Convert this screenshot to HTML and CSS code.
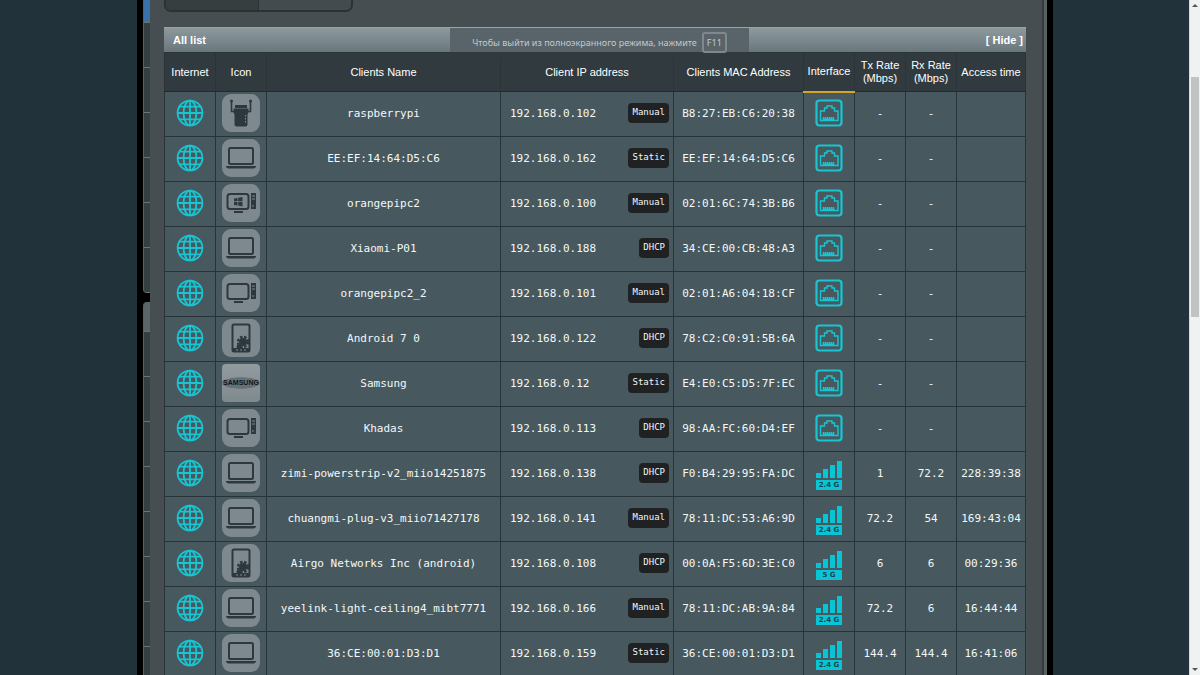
FILE: index.html
```html
<!DOCTYPE html>
<html lang="en">
<head>
<meta charset="utf-8">
<title>Client list</title>
<link rel="stylesheet" href="styles.css">
</head>
<body>
<svg class="sprite" aria-hidden="true">
  <symbol id="globe" viewBox="0 0 28 28"><g fill="none" stroke="currentColor" stroke-width="1.8"><circle cx="14" cy="14" r="12.4"/><ellipse cx="14" cy="14" rx="6.4" ry="12.4"/><path d="M14 1.6v24.8M1.6 14h24.8M3.6 7.6h20.8M3.6 20.4h20.8"/></g></symbol>
  <symbol id="laptop" viewBox="0 0 38 38"><rect x="7" y="9" width="24" height="16" rx="1.5" fill="none" stroke="currentColor" stroke-width="2"/><path fill="currentColor" d="M4 27h30v1l-2 1.500H6L4 28z"/></symbol>
  <symbol id="desktop" viewBox="0 0 38 38"><rect x="5.500" y="10" width="21" height="15" rx="2.500" fill="none" stroke="currentColor" stroke-width="2"/><path fill="currentColor" d="M12 27h9v2h-9zM29 9h5v16h-5z"/><path stroke="#7d898e" stroke-width="1" d="M30 12h3M30 15h3M30 22h2"/></symbol>
  <symbol id="windows" viewBox="0 0 38 38"><use href="#desktop"/><path fill="currentColor" d="M12 14.500l3.500-.6v3.300H12zM16.200 13.800l4.300-.8v4.200h-4.300zM12 18h3.500v3.500l-3.500-.6zM16.200 18h4.300v4.400l-4.300-.8z"/></symbol>
  <symbol id="extender" viewBox="0 0 38 38"><path fill="none" stroke="currentColor" stroke-width="1.600" d="M9.500 7v10.500h4M28.500 7v10.500h-4"/><circle cx="9.500" cy="7" r="1.500" fill="currentColor"/><circle cx="28.500" cy="7" r="1.500" fill="currentColor"/><path fill="currentColor" d="M13 11h12v3H13zM11.500 14.500h15v4l-1 2v10q0 2-2 2h-9q-2 0-2-2v-10l-1-2z"/><path stroke="#7d898e" stroke-width="1" stroke-dasharray="1.500 1.500" d="M23.500 21v8"/></symbol>
  <symbol id="phone" viewBox="0 0 38 38"><rect x="10.500" y="5.500" width="17" height="27" rx="1.500" fill="none" stroke="currentColor" stroke-width="2"/><path fill="currentColor" d="M11 29h16v4H11z"/><circle cx="21" cy="23" r="4" fill="currentColor"/><circle cx="21" cy="23" r="5" fill="none" stroke="currentColor" stroke-width="2.500" stroke-dasharray="2.500 1.500"/><circle cx="17" cy="28" r="2.500" fill="currentColor"/><path stroke="#7d898e" d="M14 31h2M18 31h2M22 31h2"/></symbol>
  <symbol id="ethernet" viewBox="0 0 28 28"><rect x="1.500" y="1.500" width="25" height="25" rx="3" fill="none" stroke="currentColor" stroke-width="2.200"/><path fill="none" stroke="currentColor" stroke-width="1.400" d="M5.500 21.500V12h4V9h2.500V7h5v2h2.500v3h3.500v9.500z"/><path stroke="currentColor" stroke-width="1.500" d="M8.500 22v-4M10.500 22v-4M12.500 22v-4M14.500 22v-4M16.500 22v-4M18.500 22v-4M8 20.500h11"/></symbol>
  <symbol id="bars" viewBox="0 0 26 17"><path fill="currentColor" d="M0 12h5v5H0zM7 8h5v9H7zM14 4h5v13h-5zM21 0h5v17h-5z"/></symbol>
</svg>

<div class="page">
  <div class="frame">
    <nav class="rail" aria-label="Main menu">
      <div class="rail-group"><a class="active" href="#" aria-label="Network map"></a><a href="#" aria-label="Guest network"></a><a href="#" aria-label="Protection"></a><a href="#" aria-label="Traffic"></a><a href="#" aria-label="Media"></a><a href="#" aria-label="Cloud"></a><a href="#" aria-label="Tools"></a></div>
      <div class="rail-group"><a href="#" aria-label="Wireless"></a><a href="#" aria-label="LAN"></a><a href="#" aria-label="WAN"></a><a href="#" aria-label="IPv6"></a><a href="#" aria-label="VPN"></a><a href="#" aria-label="Firewall"></a><a href="#" aria-label="Administration"></a><a href="#" aria-label="System log"></a><a href="#" aria-label="Settings"></a></div>
    </nav>
    <main class="content">
      <div class="tabs"><button type="button" class="on" aria-label="By interface"></button><button type="button" aria-label="All"></button></div>
      <header class="title"><h1>All list</h1><button type="button">[ Hide ]</button></header>
      <table class="clients">
        <colgroup><col class="c-small"><col class="c-small"><col><col class="c-ip"><col class="c-mac"><col class="c-small"><col class="c-small"><col class="c-small"><col class="c-time"></colgroup>
        <thead><tr><th>Internet</th><th>Icon</th><th>Clients Name</th><th>Client IP address</th><th>Clients MAC Address</th><th class="sorted">Interface</th><th>Tx Rate (Mbps)</th><th>Rx Rate (Mbps)</th><th>Access time</th></tr></thead>
        <tbody>
          <tr><td><svg class="globe"><use href="#globe"/></svg></td><td><svg class="device"><use href="#extender"/></svg></td><td>raspberrypi</td><td><div class="ip">192.168.0.102<span class="badge">Manual</span></div></td><td>B8:27:EB:C6:20:38</td><td><svg class="port"><use href="#ethernet"/></svg></td><td>-</td><td>-</td><td></td></tr>
          <tr><td><svg class="globe"><use href="#globe"/></svg></td><td><svg class="device"><use href="#laptop"/></svg></td><td>EE:EF:14:64:D5:C6</td><td><div class="ip">192.168.0.162<span class="badge">Static</span></div></td><td>EE:EF:14:64:D5:C6</td><td><svg class="port"><use href="#ethernet"/></svg></td><td>-</td><td>-</td><td></td></tr>
          <tr><td><svg class="globe"><use href="#globe"/></svg></td><td><svg class="device"><use href="#windows"/></svg></td><td>orangepipc2</td><td><div class="ip">192.168.0.100<span class="badge">Manual</span></div></td><td>02:01:6C:74:3B:B6</td><td><svg class="port"><use href="#ethernet"/></svg></td><td>-</td><td>-</td><td></td></tr>
          <tr><td><svg class="globe"><use href="#globe"/></svg></td><td><svg class="device"><use href="#laptop"/></svg></td><td>Xiaomi-P01</td><td><div class="ip">192.168.0.188<span class="badge">DHCP</span></div></td><td>34:CE:00:CB:48:A3</td><td><svg class="port"><use href="#ethernet"/></svg></td><td>-</td><td>-</td><td></td></tr>
          <tr><td><svg class="globe"><use href="#globe"/></svg></td><td><svg class="device"><use href="#desktop"/></svg></td><td>orangepipc2_2</td><td><div class="ip">192.168.0.101<span class="badge">Manual</span></div></td><td>02:01:A6:04:18:CF</td><td><svg class="port"><use href="#ethernet"/></svg></td><td>-</td><td>-</td><td></td></tr>
          <tr><td><svg class="globe"><use href="#globe"/></svg></td><td><svg class="device"><use href="#phone"/></svg></td><td>Android 7 0</td><td><div class="ip">192.168.0.122<span class="badge">DHCP</span></div></td><td>78:C2:C0:91:5B:6A</td><td><svg class="port"><use href="#ethernet"/></svg></td><td>-</td><td>-</td><td></td></tr>
          <tr><td><svg class="globe"><use href="#globe"/></svg></td><td><div class="device brand">SAMSUNG</div></td><td>Samsung</td><td><div class="ip">192.168.0.12<span class="badge">Static</span></div></td><td>E4:E0:C5:D5:7F:EC</td><td><svg class="port"><use href="#ethernet"/></svg></td><td>-</td><td>-</td><td></td></tr>
          <tr><td><svg class="globe"><use href="#globe"/></svg></td><td><svg class="device"><use href="#desktop"/></svg></td><td>Khadas</td><td><div class="ip">192.168.0.113<span class="badge">DHCP</span></div></td><td>98:AA:FC:60:D4:EF</td><td><svg class="port"><use href="#ethernet"/></svg></td><td>-</td><td>-</td><td></td></tr>
          <tr><td><svg class="globe"><use href="#globe"/></svg></td><td><svg class="device"><use href="#laptop"/></svg></td><td>zimi-powerstrip-v2_miio14251875</td><td><div class="ip">192.168.0.138<span class="badge">DHCP</span></div></td><td>F0:B4:29:95:FA:DC</td><td><div class="wifi"><svg><use href="#bars"/></svg><span>2.4 G</span></div></td><td>1</td><td>72.2</td><td>228:39:38</td></tr>
          <tr><td><svg class="globe"><use href="#globe"/></svg></td><td><svg class="device"><use href="#laptop"/></svg></td><td>chuangmi-plug-v3_miio71427178</td><td><div class="ip">192.168.0.141<span class="badge">Manual</span></div></td><td>78:11:DC:53:A6:9D</td><td><div class="wifi"><svg><use href="#bars"/></svg><span>2.4 G</span></div></td><td>72.2</td><td>54</td><td>169:43:04</td></tr>
          <tr><td><svg class="globe"><use href="#globe"/></svg></td><td><svg class="device"><use href="#phone"/></svg></td><td>Airgo Networks Inc (android)</td><td><div class="ip">192.168.0.108<span class="badge">DHCP</span></div></td><td>00:0A:F5:6D:3E:C0</td><td><div class="wifi"><svg><use href="#bars"/></svg><span>5 G</span></div></td><td>6</td><td>6</td><td>00:29:36</td></tr>
          <tr><td><svg class="globe"><use href="#globe"/></svg></td><td><svg class="device"><use href="#laptop"/></svg></td><td>yeelink-light-ceiling4_mibt7771</td><td><div class="ip">192.168.0.166<span class="badge">Manual</span></div></td><td>78:11:DC:AB:9A:84</td><td><div class="wifi"><svg><use href="#bars"/></svg><span>2.4 G</span></div></td><td>72.2</td><td>6</td><td>16:44:44</td></tr>
          <tr><td><svg class="globe"><use href="#globe"/></svg></td><td><svg class="device"><use href="#laptop"/></svg></td><td>36:CE:00:01:D3:D1</td><td><div class="ip">192.168.0.159<span class="badge">Static</span></div></td><td>36:CE:00:01:D3:D1</td><td><div class="wifi"><svg><use href="#bars"/></svg><span>2.4 G</span></div></td><td>144.4</td><td>144.4</td><td>16:41:06</td></tr>
        </tbody>
      </table>
    </main>
  </div>
</div>
<div class="scrollbar" aria-hidden="true"><span class="arrow up"></span><span class="thumb"></span><span class="arrow down"></span></div>
<div class="toast" role="status">Чтобы выйти из полноэкранного режима, нажмите <kbd>F11</kbd></div>
</body>
</html>
```

FILE: styles.css
```css
* { box-sizing: border-box; }

body {
  display: flex;
  height: 100vh;
  margin: 0;
  overflow: hidden;
  background: #21323b;
  color: #fff;
  font: 11px/13px "Liberation Sans", Arial, sans-serif;
}

button { padding: 0; border: 0; background: none; color: inherit; font: inherit; }
.sprite { position: absolute; width: 0; height: 0; }

.page { flex: 1; min-width: 0; padding: 0 136px 0 137px; }

.frame {
  display: flex;
  align-items: flex-start;
  min-height: 100%;
  padding: 0 6px;
  background: #000;
}

/* Menu column at the left edge of the content */
.rail { display: grid; gap: 9px; width: 7px; flex: none; }
.rail-group { border-left: 1px solid #586264; border-radius: 0 0 0 4px; overflow: hidden; background: #343f42; }
.rail-group + .rail-group { border-radius: 4px 0 0 0; }
.rail a { display: block; height: 45px; border-bottom: 1px solid #687476; }
.rail a.active { height: 23px; background: #3971a8; }
.rail-group + .rail-group a:first-child { height: 30px; background: #59666a; }

.content {
  flex: 1;
  min-width: 0;
  padding: 0 18px 0 14px;
  border-right: 3px solid #586160;
  background: #474e51;
  box-shadow: inset -2px 0 #353b3c;
}

.tabs {
  display: flex;
  width: 189px;
  height: 12px;
  margin-bottom: 15px;
  overflow: hidden;
  border: 2px solid #2b3234;
  border-top: 0;
  border-radius: 0 0 7px 7px;
}
.tabs button { flex: 1; background: #444b4e; }
.tabs .on { background: #363e40; border-right: 1px solid #2b3234; }

.title {
  display: flex;
  align-items: center;
  justify-content: space-between;
  height: 25px;
  padding: 0 3px 0 9px;
  border-top: 1px solid #98a3a7;
  background: linear-gradient(#8e999e, #69777c);
  font-weight: bold;
}
.title h1 { margin: 0; font-size: 11px; }

.clients {
  width: 100%;
  border-collapse: collapse;
  table-layout: fixed;
  border: 1px solid #202b2f;
}
.c-small { width: 51px; }
.c-ip { width: 173px; }
.c-mac { width: 130px; }
.c-time { width: 69px; }

.clients th {
  height: 39px;
  padding: 0;
  border: 1px solid #2b3539;
  border-bottom-color: #202b2f;
  background: #303a3f;
  font-weight: normal;
}
.clients th.sorted { border-bottom: 2px solid #d3a52b; }

.clients td {
  height: 45px;
  padding: 0 0 2px;
  border: 1px solid #26343a;
  background: #47595f;
  color: #f4f8f8;
  font-family: "DejaVu Sans Mono", monospace;
  text-align: center;
  white-space: nowrap;
}
.clients svg { display: block; margin: 0 auto; }

.globe, .port { width: 28px; height: 28px; color: #19c5d2; }

.device {
  width: 38px;
  height: 38px;
  margin: 0 auto;
  border-radius: 9px;
  background: #7d898e;
  color: #2c383d;
}
.brand {
  display: grid;
  place-items: center;
  overflow: hidden;
  border-radius: 4px;
  background: radial-gradient(20px 6px, #667175 90%, transparent), linear-gradient(#929a9e, #7f8a8f);
  color: #10161a;
  font: bold 7px/8px "Liberation Sans", Arial, sans-serif;
}

.ip { display: flex; align-items: center; justify-content: space-between; padding: 0 4px 0 9px; }
.badge { padding: 3px 4px 4px; border-radius: 4px; background: #1f2123; font-size: 9px; }

.wifi { display: grid; gap: 2px; width: 26px; margin: 4px auto 0; color: #08c4d5; }
.wifi svg { width: 26px; height: 17px; }
.wifi span { height: 10px; background: #08c4d5; color: #17434c; font: bold 7px/10px "DejaVu Sans", sans-serif; }

.scrollbar {
  display: flex;
  flex-direction: column;
  align-items: center;
  width: 11px;
  padding: 4px 0;
  border-left: 1px solid #d9dddf;
  background: #f0f1f1;
}
.arrow { border: 3px solid transparent; }
.up { border-top: 0; border-bottom: 3px solid #555; }
.down { border-bottom: 0; border-top: 3px solid #555; margin-top: auto; }
.thumb { width: 8px; height: 36%; margin-top: 70px; background: #c1c2c2; }

/* Full-screen hint floating over the page */
.toast {
  position: fixed;
  top: 28px;
  left: 50%;
  display: flex;
  align-items: center;
  justify-content: center;
  gap: 5px;
  width: 299px;
  height: 29px;
  margin-left: -150px;
  background: linear-gradient(#59646a 0 24px, #303a3f 24px);
  color: #c3c9cc;
  font: 9px/15px "Noto Sans", sans-serif;
}
.toast kbd { padding: 1px 3px; border: 2px solid #7e888d; border-radius: 3px; font: inherit; }
```
